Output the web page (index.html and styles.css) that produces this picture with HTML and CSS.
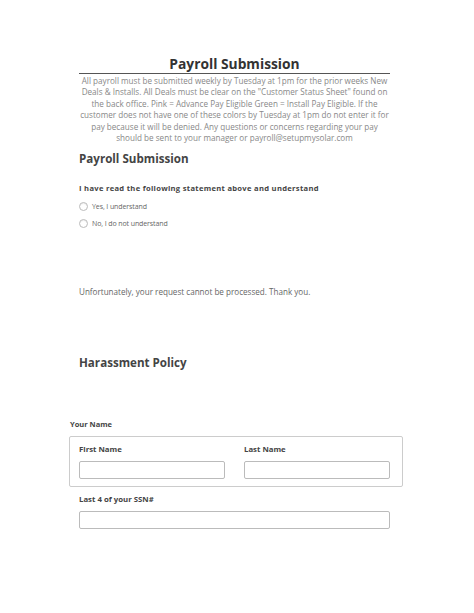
FILE: index.html
```html
<!DOCTYPE html>
<html>
<head>
<meta charset="utf-8">
<link rel="stylesheet" href="styles.css">
</head>
<body>
<div class="page">
  <div class="head">
    <h1 class="title">Payroll Submission</h1>
    <p class="intro">All payroll must be submitted weekly by Tuesday at 1pm for the prior weeks New Deals &amp; Installs. All Deals must be clear on the "Customer Status Sheet" found on the back office. Pink = Advance Pay Eligible Green = Install Pay Eligible. If the customer does not have one of these colors by Tuesday at 1pm do not enter it for pay because it will be denied. Any questions or concerns regarding your pay should be sent to your manager or payroll@setupmysolar.com</p>
  </div>
  <div class="section">
    <h2 class="sec-title">Payroll Submission</h2>
    <div class="q-label">I have read the following statement above and understand</div>
    <label class="radio"><span class="circle"></span>Yes, I understand</label>
    <label class="radio"><span class="circle"></span>No, I do not understand</label>
    <p class="note">Unfortunately, your request cannot be processed. Thank you.</p>
    <h2 class="sec-title harass">Harassment Policy</h2>
  </div>
  <div class="group-label">Your Name</div>
  <div class="fieldset">
    <div class="field">
      <div class="f-label">First Name</div>
      <div class="input"></div>
    </div>
    <div class="field">
      <div class="f-label">Last Name</div>
      <div class="input"></div>
    </div>
  </div>
  <div class="single">
    <div class="f-label">Last 4 of your SSN#</div>
    <div class="input"></div>
  </div>
</div>
</body>
</html>
```
FILE: styles.css
```css
html, body {
  margin: 0;
  padding: 0;
  background: #fff;
}
body {
  font-family: "Open Sans", "Liberation Sans", sans-serif;
  color: #333;
}
.page {
  width: 334px;
  margin-left: 69px;
  padding-top: 54px;
}
.head {
  margin: 0 13px 0 10px;
}
.title {
  margin: 0;
  font-size: 13.8px;
  line-height: 19px;
  font-weight: 700;
  text-align: center;
  color: #333;
  border-bottom: 1.5px solid #555;
  padding-bottom: 0;
}
.intro {
  margin: 1px 0 0;
  font-size: 8.15px;
  line-height: 11.4px;
  color: #888;
  text-align: center;
}
.section {
  margin: 0 13px 0 10px;
}
.sec-title {
  margin: 8px 0 0;
  font-size: 11.6px;
  line-height: 16px;
  font-weight: 700;
  color: #444;
}
.q-label {
  margin-top: 15px;
  font-size: 7.6px;
  font-weight: 700;
  letter-spacing: 0.3px;
  color: #444;
  line-height: 12px;
}
.radio {
  display: flex;
  align-items: center;
  gap: 4px;
  font-size: 7px;
  color: #666;
  height: 12px;
  margin-top: 6px;
  letter-spacing: -0.1px;
}
.radio + .radio {
  margin-top: 5px;
}
.circle {
  width: 9px;
  height: 9px;
  border: 1px solid #bbb;
  border-radius: 50%;
  box-sizing: border-box;
  box-shadow: inset 0 1px 1px rgba(0,0,0,0.08);
}
.note {
  margin: 57px 0 0;
  font-size: 8.1px;
  line-height: 12px;
  color: #666;
}
.sec-title.harass {
  margin-top: 57px;
}
.group-label {
  margin-top: 47px;
  font-size: 7.5px;
  font-weight: 700;
  color: #444;
  line-height: 12px;
  padding-left: 1px;
}
.fieldset {
  margin-top: 6px;
  border: 1px solid #ccc;
  border-radius: 2px;
  display: grid;
  grid-template-columns: 146px 146px;
  column-gap: 19px;
  padding: 6px 12px 7px 9px;
  height: 51px;
  box-sizing: border-box;
}
.f-label {
  font-size: 7.8px;
  font-weight: 700;
  color: #444;
  line-height: 12px;
}
.input {
  margin-top: 6px;
  height: 18px;
  border: 1px solid #bbb;
  border-radius: 2px;
  box-sizing: border-box;
}
.single {
  margin: 6px 13px 0 10px;
}
```
